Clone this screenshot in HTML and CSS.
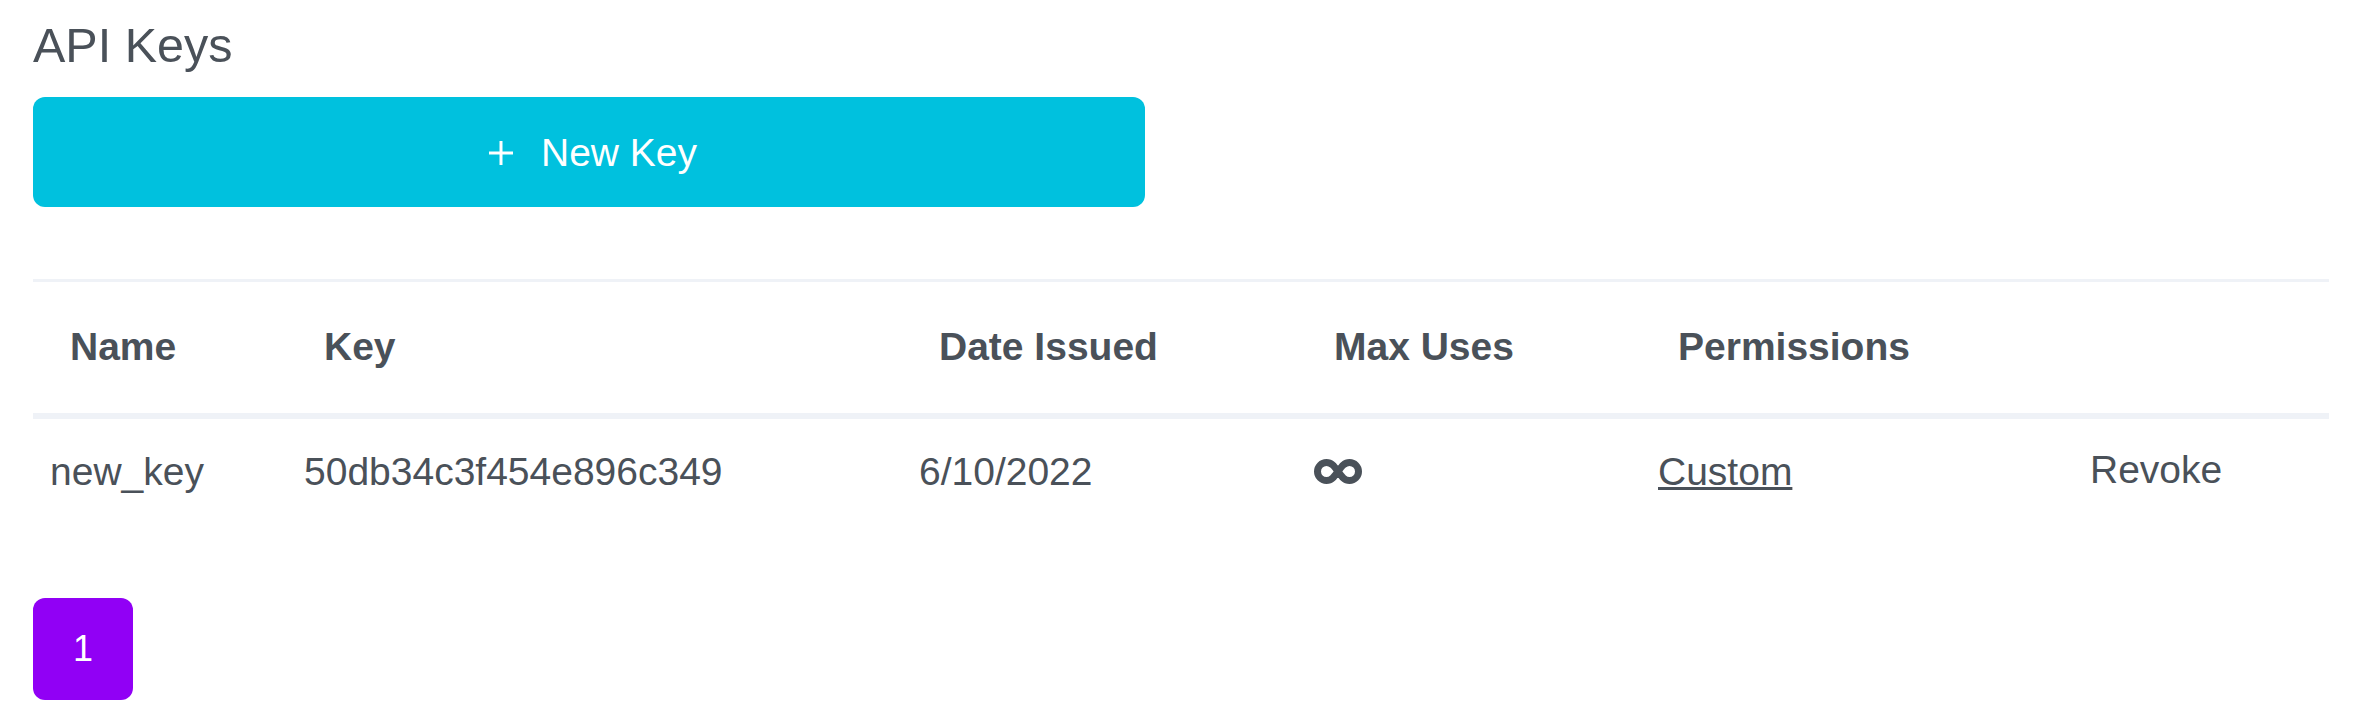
FILE: index.html
```html
<!DOCTYPE html>
<html lang="en">
<head>
  <meta charset="UTF-8">
  <title>API Keys</title>
  <link rel="stylesheet" href="styles.css">
</head>
<body>

  <h1 class="page-title">API Keys</h1>

  <button class="new-key-btn" type="button">
    <svg class="plus-icon" viewBox="0 0 24 24" aria-hidden="true"><path d="M12 0V24M0 12H24"/></svg>
    <span>New Key</span>
  </button>

  <table class="keys-table">
    <thead>
      <tr>
        <th class="col-name">Name</th>
        <th class="col-key">Key</th>
        <th class="col-date">Date Issued</th>
        <th class="col-uses">Max Uses</th>
        <th class="col-perm">Permissions</th>
        <th class="col-action"></th>
      </tr>
    </thead>
    <tbody>
      <tr>
        <td>new_key</td>
        <td>50db34c3f454e896c349</td>
        <td>6/10/2022</td>
        <td>
          <svg class="infinity-icon" viewBox="0 0 48 25" aria-hidden="true"><path d="M24 12.500C20 7 17.500 3.500 12.500 3.500 7.500 3.500 3.500 7.500 3.500 12.500S7.500 21.500 12.500 21.500C17.500 21.500 20 18 24 12.500 28 7 30.500 3.500 35.500 3.500 40.500 3.500 44.500 7.500 44.500 12.500S40.500 21.500 35.500 21.500C30.500 21.500 28 18 24 12.500Z"/></svg>
        </td>
        <td><a class="perm-link" href="#">Custom</a></td>
        <td><span class="revoke">Revoke</span></td>
      </tr>
    </tbody>
  </table>

  <div class="pagination">
    <a class="page-num" href="#">1</a>
  </div>

</body>
</html>
```

FILE: styles.css
```css
body {
  margin: 0;
  padding: 0 31px 0 33px;
  background-color: #fff;
  color: #4a5159;
  font-family: "Liberation Sans", Arial, sans-serif;
}

.page-title {
  margin: 0;
  padding-top: 18px;
  height: 97px;
  box-sizing: border-box;
  font-size: 48.500px;
  line-height: 55px;
  font-weight: 400;
}

.new-key-btn {
  display: flex;
  align-items: center;
  justify-content: center;
  gap: 28px;
  width: 1112px;
  height: 110px;
  padding: 2px 0 0 8px;
  border: none;
  border-radius: 12px;
  background-color: #00c1de;
  color: #fff;
  font-family: inherit;
  font-size: 39px;
}

.plus-icon {
  width: 24px;
  height: 24px;
  fill: none;
  stroke: #fff;
  stroke-width: 3;
}

.keys-table {
  width: 100%;
  margin-top: 72px;
  border-collapse: collapse;
  table-layout: fixed;
  border-top: 3px solid #eff2f7;
  font-size: 39px;
}

.keys-table th {
  box-sizing: border-box;
  height: 135px;
  padding: 0 0 0 37px;
  text-align: left;
  font-weight: 700;
  border-bottom: 6px solid #eff2f7;
}

.keys-table td {
  box-sizing: border-box;
  height: 107px;
  padding: 2px 0 0 17px;
}

.col-name { width: 254px; }
.col-key { width: 615px; }
.col-date { width: 395px; }
.col-uses { width: 344px; }
.col-perm { width: 432px; }

.infinity-icon {
  display: block;
  width: 48px;
  height: 25px;
  fill: none;
  stroke: #4a5159;
  stroke-width: 7;
}

.perm-link {
  color: inherit;
}

.revoke {
  display: block;
  margin-top: -4px;
}

.pagination {
  display: flex;
  margin-top: 75px;
}

.page-num {
  display: flex;
  align-items: center;
  justify-content: center;
  width: 100px;
  height: 102px;
  border-radius: 12px;
  background-color: #9100f5;
  color: #fff;
  font-size: 36px;
  text-decoration: none;
}
```
